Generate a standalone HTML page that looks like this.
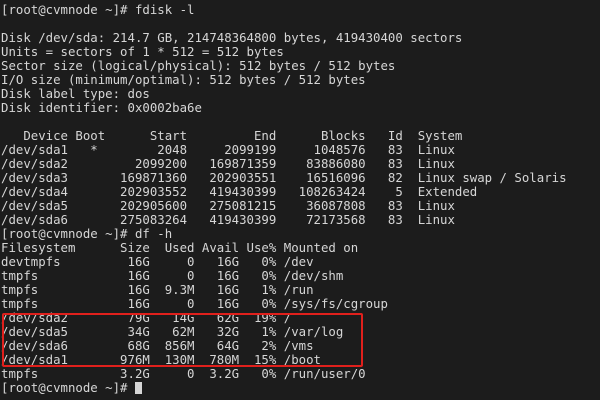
<!DOCTYPE html>
<html><head><style>
html,body{margin:0;padding:0;background:#1c1c1c;width:600px;height:400px;overflow:hidden}
pre{position:absolute;left:1px;top:3px;margin:0;font-family:"DejaVu Sans Mono","Liberation Mono",monospace;font-size:12.37px;line-height:14px;color:#d6d6d6}
.box{position:absolute;left:2px;top:313px;width:357px;height:50px;border:2px solid #e0201c;border-radius:2px}
.cur{display:inline-block;width:7px;height:12px;background:#d6d6d6;vertical-align:-2px}
</style></head><body>
<pre>[root@cvmnode ~]# fdisk -l

Disk /dev/sda: 214.7 GB, 214748364800 bytes, 419430400 sectors
Units = sectors of 1 * 512 = 512 bytes
Sector size (logical/physical): 512 bytes / 512 bytes
I/O size (minimum/optimal): 512 bytes / 512 bytes
Disk label type: dos
Disk identifier: 0x0002ba6e

   Device Boot      Start         End      Blocks   Id  System
/dev/sda1   *        2048     2099199     1048576   83  Linux
/dev/sda2         2099200   169871359    83886080   83  Linux
/dev/sda3       169871360   202903551    16516096   82  Linux swap / Solaris
/dev/sda4       202903552   419430399   108263424    5  Extended
/dev/sda5       202905600   275081215    36087808   83  Linux
/dev/sda6       275083264   419430399    72173568   83  Linux
[root@cvmnode ~]# df -h
Filesystem      Size  Used Avail Use% Mounted on
devtmpfs         16G     0   16G   0% /dev
tmpfs            16G     0   16G   0% /dev/shm
tmpfs            16G  9.3M   16G   1% /run
tmpfs            16G     0   16G   0% /sys/fs/cgroup
/dev/sda2        79G   14G   62G  19% /
/dev/sda5        34G   62M   32G   1% /var/log
/dev/sda6        68G  856M   64G   2% /vms
/dev/sda1       976M  130M  780M  15% /boot
tmpfs           3.2G     0  3.2G   0% /run/user/0
[root@cvmnode ~]# <span class="cur"></span></pre>
<div class="box"></div>
</body></html>
